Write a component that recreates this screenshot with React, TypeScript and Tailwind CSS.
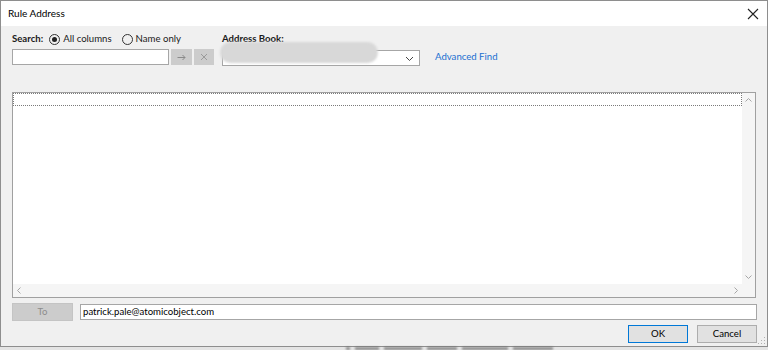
import React from "react";

export default function App() {
  const font = { fontFamily: 'Lato, "Noto Sans", sans-serif' };
  return (
    <div className="w-[768px] h-[350px] bg-[#e4e4e4] relative overflow-hidden" style={font}>
      <div className="absolute left-0 top-0 w-[768px] h-[347px] border border-[#8e8e8e] bg-[#f0f0f0] flex flex-col text-[9.6px] text-[#1a1a1a]">
        {/* title bar */}
        <div className="h-[25px] bg-white flex items-center justify-between pl-[7px] pr-[8px] shrink-0">
          <span className="text-[10px] text-black">Rule Address</span>
          <svg width="12" height="12" viewBox="0 0 12 12">
            <path d="M1 1 L11 11 M11 1 L1 11" stroke="#222" strokeWidth="1.1" />
          </svg>
        </div>
        {/* search row */}
        <div className="flex pl-[11px] pt-[6px] shrink-0">
          <div className="flex flex-col w-[210px]">
            <div className="flex items-center h-[14px]">
              <span className="font-bold mr-[6px]">Search:</span>
              <span className="w-[11px] h-[11px] rounded-full border border-[#333] flex items-center justify-center mr-[3px]">
                <span className="w-[5px] h-[5px] rounded-full bg-[#222]" />
              </span>
              <span className="mr-[10px]">All columns</span>
              <span className="w-[11px] h-[11px] rounded-full border border-[#333] mr-[3px]" />
              <span>Name only</span>
            </div>
            <div className="flex items-center mt-[3px] gap-[2px]">
              <div className="w-[157px] h-[16px] bg-white border border-[#a6a6a6]" />
              <div className="w-[21px] h-[16px] bg-[#cccccc] flex items-center justify-center">
                <svg width="9" height="7" viewBox="0 0 9 7">
                  <path d="M0.5 3.5 H8 M5.5 1 L8 3.5 L5.5 6" stroke="#8a8a8a" strokeWidth="1" fill="none" />
                </svg>
              </div>
              <div className="w-[20px] h-[16px] bg-[#cccccc] flex items-center justify-center">
                <svg width="8" height="8" viewBox="0 0 8 8">
                  <path d="M1 1 L7 7 M7 1 L1 7" stroke="#9a9a9a" strokeWidth="1" />
                </svg>
              </div>
            </div>
          </div>
          <div className="flex flex-col">
            <span className="font-bold h-[14px] leading-[14px]">Address Book:</span>
            <div className="flex items-center mt-[4px]">
              <div className="relative w-[198px] h-[16px] bg-white border border-[#a6a6a6]">
                <div className="absolute left-[-3px] top-[-9px] w-[158px] h-[21px] rounded-full bg-[#d8d8d8] blur-[1px]" />
                <svg width="9" height="6" viewBox="0 0 9 6" className="absolute right-[5px] top-[5px]">
                  <path d="M1 1 L4.5 4.5 L8 1" stroke="#444" strokeWidth="1" fill="none" />
                </svg>
              </div>
              <span className="ml-[15px] text-[#1a6fd1] -mt-[2px]">Advanced Find</span>
            </div>
          </div>
        </div>
        {/* list box */}
        <div className="mx-[11px] mt-[26px] h-[206px] w-[744px] bg-white border border-[#a0a0a0] flex flex-col shrink-0">
          <div className="flex flex-1 min-h-0">
            <div className="flex-1">
              <div className="h-[13px] border border-dotted border-[#7a7a7a]" />
            </div>
            <div className="w-[13px] bg-[#f5f5f5] flex flex-col items-center justify-between py-[5px]">
              <svg width="7" height="4" viewBox="0 0 7 4"><path d="M0.5 3.5 L3.5 0.5 L6.5 3.5" stroke="#a6a6a6" fill="none" /></svg>
              <svg width="7" height="4" viewBox="0 0 7 4"><path d="M0.5 0.5 L3.5 3.5 L6.5 0.5" stroke="#a6a6a6" fill="none" /></svg>
            </div>
          </div>
          <div className="h-[13px] bg-[#f5f5f5] flex items-center justify-between pl-[4px] pr-[17px] shrink-0">
            <svg width="4" height="7" viewBox="0 0 4 7"><path d="M3.5 0.5 L0.5 3.5 L3.5 6.5" stroke="#a6a6a6" fill="none" /></svg>
            <svg width="4" height="7" viewBox="0 0 4 7"><path d="M0.5 0.5 L3.5 3.5 L0.5 6.5" stroke="#a6a6a6" fill="none" /></svg>
          </div>
        </div>
        {/* To row */}
        <div className="flex items-center pl-[11px] mt-[5px] shrink-0">
          <div className="w-[61px] h-[18px] bg-[#cccccc] border border-[#c4c4c4] flex items-center justify-center text-[#8c8c8c]">To</div>
          <div className="ml-[7px] w-[677px] h-[16px] bg-white border border-[#a6a6a6] flex items-center pl-[2px] text-black">
            patrick.pale@atomicobject.com
          </div>
        </div>
        {/* buttons */}
        <div className="flex justify-end pr-[10px] mt-[4px] gap-[9px] shrink-0">
          <div className="w-[60px] h-[18px] bg-[#e1e1e1] border border-[#0078d7] flex items-center justify-center text-black">OK</div>
          <div className="w-[60px] h-[18px] bg-[#e1e1e1] border border-[#adadad] flex items-center justify-center text-black">Cancel</div>
        </div>
        <svg width="8" height="8" viewBox="0 0 8 8" className="absolute right-[1px] bottom-[1px]">
          <rect x="6" y="6" width="1" height="1" fill="#b0b0b0" />
          <rect x="3" y="6" width="1" height="1" fill="#b0b0b0" />
          <rect x="6" y="3" width="1" height="1" fill="#b0b0b0" />
          <rect x="0" y="6" width="1" height="1" fill="#b0b0b0" />
          <rect x="3" y="3" width="1" height="1" fill="#b0b0b0" />
          <rect x="6" y="0" width="1" height="1" fill="#b0b0b0" />
        </svg>
      </div>
      <div className="absolute left-[346px] top-[347px] flex gap-[5px] blur-[1px] opacity-60">
        <span className="w-[4px] h-[3px] bg-[#555]" />
        <span className="w-[24px] h-[3px] bg-[#555]" />
        <span className="w-[38px] h-[3px] bg-[#555]" />
        <span className="w-[30px] h-[3px] bg-[#555]" />
        <span className="w-[46px] h-[3px] bg-[#555]" />
        <span className="w-[40px] h-[3px] bg-[#555]" />
      </div>
    </div>
  );
}
